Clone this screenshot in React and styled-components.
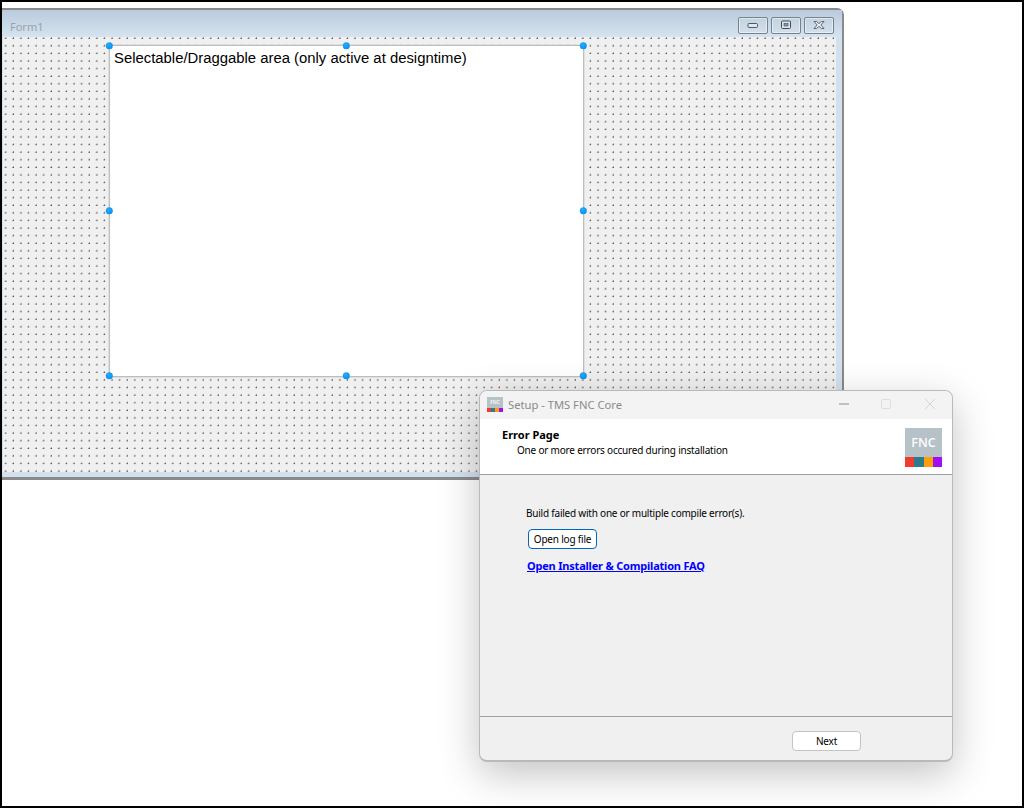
import React from 'react';
import styled, { createGlobalStyle } from 'styled-components';

const GlobalStyle = createGlobalStyle`
  html, body {
    margin: 0;
    padding: 0;
    background: #fff;
  }
`;

const HANDLES = [
  ['0%', '0%'], ['50%', '0%'], ['calc(100% + 1px)', '0%'],
  ['0%', '50%'], ['calc(100% + 1px)', '50%'],
  ['0%', '100%'], ['50%', '100%'], ['calc(100% + 1px)', '100%'],
];

const LOGO_COLORS = ['#f23a30', '#2b7c8e', '#ff9e0b', '#a00ff2'];

function Logo({ small }) {
  return (
    <LogoBox $small={small}>
      <LogoText $small={small}>FNC</LogoText>
      <LogoBar $small={small}>
        {LOGO_COLORS.map((c) => <LogoSwatch key={c} $color={c} />)}
      </LogoBar>
    </LogoBox>
  );
}

export default function App() {
  return (
    <>
      <GlobalStyle />
      <Screen>
        <FormWindow>
          <FormTitleBar>
            <FormTitle>Form1</FormTitle>
            <CaptionButtons>
              <CaptionButton>
                <svg width="12" height="8" viewBox="0 0 12 8">
                  <rect x="1" y="2.500" width="9.500" height="4" rx="1" fill="#dfe6ec" stroke="#4d5a66" />
                </svg>
              </CaptionButton>
              <CaptionButton>
                <svg width="12" height="10" viewBox="0 0 12 10">
                  <rect x="1.500" y="1" width="9" height="7.500" rx="1" fill="#dfe6ec" stroke="#3f4a55" />
                  <rect x="4" y="3.500" width="4" height="2.500" fill="#8c98a3" stroke="#3f4a55" strokeWidth=".6" />
                </svg>
              </CaptionButton>
              <CaptionButton>
                <svg width="14" height="10" viewBox="0 0 14 10">
                  <path d="M2 1.500h2.500L7 3.600 9.500 1.500H12L8.800 5 12 8.500H9.500L7 6.400 4.500 8.500H2L5.200 5Z" fill="#eef2f5" stroke="#4d5a66" strokeWidth=".9" />
                </svg>
              </CaptionButton>
            </CaptionButtons>
          </FormTitleBar>
          <DesignSurface>
            <DragArea>
              <DragLabel>Selectable/Draggable area (only active at designtime)</DragLabel>
              {HANDLES.map(([x, y]) => <Handle key={x + y} $x={x} $y={y} />)}
            </DragArea>
          </DesignSurface>
        </FormWindow>

        <SetupDialog>
          <DialogTitleBar>
            <Logo small />
            <DialogTitle>Setup - TMS FNC Core</DialogTitle>
            <DialogControls>
              <svg width="12" height="12" viewBox="0 0 12 12">
                <path d="M1 6h10" stroke="#8f8f8f" strokeWidth="1.200" />
              </svg>
              <svg width="12" height="12" viewBox="0 0 12 12">
                <rect x="1.500" y="1.500" width="9" height="9" rx="1" fill="none" stroke="#dcdcdc" />
              </svg>
              <svg width="14" height="12" viewBox="-2 0 14 12">
                <path d="M1 1l10 10M11 1L1 11" stroke="#d4d4d4" />
              </svg>
            </DialogControls>
          </DialogTitleBar>
          <DialogHeader>
            <HeaderText>
              <HeaderTitle>Error Page</HeaderTitle>
              <HeaderSub>One or more errors occured during installation</HeaderSub>
            </HeaderText>
            <Logo />
          </DialogHeader>
          <DialogBody>
            <BodyText>Build failed with one or multiple compile error(s).</BodyText>
            <LogButton>Open log file</LogButton>
            <FaqLink href="#faq">Open Installer &amp; Compilation FAQ</FaqLink>
          </DialogBody>
          <DialogFooter>
            <NextButton>Next</NextButton>
          </DialogFooter>
        </SetupDialog>
      </Screen>
    </>
  );
}

const Screen = styled.div`
  position: relative;
  box-sizing: border-box;
  width: 1024px;
  height: 808px;
  overflow: hidden;
  background: #fff;
  border: 2px solid #000;
`;

const FormWindow = styled.div`
  position: absolute;
  left: 0;
  top: 6px;
  box-sizing: border-box;
  width: 842px;
  height: 472px;
  display: flex;
  flex-direction: column;
  padding: 0 6px 5px 1px;
  background: #d3e1ef;
  border: solid #8a8a8a;
  border-width: 2px 2px 3px 0;
  border-top-right-radius: 7px;
`;

const FormTitleBar = styled.div`
  height: 27px;
  margin: 0 -6px 0 -1px;
  padding: 0 8px;
  flex: none;
  display: flex;
  align-items: center;
  justify-content: space-between;
  background: linear-gradient(#b9cbdc, #d6e3f0);
`;

const FormTitle = styled.span`
  margin-top: 6px;
  font: 11px "Noto Sans", sans-serif;
  color: #9aa3aa;
`;

const CaptionButtons = styled.div`
  display: flex;
  gap: 3px;
  margin-top: 3px;
`;

const CaptionButton = styled.div`
  box-sizing: border-box;
  width: 30px;
  height: 17px;
  display: flex;
  align-items: center;
  justify-content: center;
  background: linear-gradient(#c4d3e1, #d3dfeb);
  border: 1px solid #75838f;
  border-radius: 2px;
  box-shadow: inset 0 0 0 1px rgba(255, 255, 255, 0.45);
`;

const DesignSurface = styled.div`
  flex: 1;
  min-height: 0;
  padding: 8px 0 0 106px;
  background-color: #f0f0f0;
  background-image: radial-gradient(circle at 1px 1px, #111 0, #111 0.55px, transparent 0.75px);
  background-size: 7.6px 7.6px;
  background-position: 1.5px 0;
`;

const DragArea = styled.div`
  position: relative;
  box-sizing: border-box;
  width: 475px;
  height: 332px;
  padding: 3px 4px;
  background: #fff;
  border: 1px solid #bdbdbd;
  box-shadow: 0 0 0 0.5px #d0d0d0;
`;

const DragLabel = styled.div`
  font: 14.86px/18px "Liberation Sans", Arial, sans-serif;
  color: #000;
`;

const Handle = styled.span`
  position: absolute;
  left: ${(p) => p.$x};
  top: ${(p) => p.$y};
  width: 7px;
  height: 7px;
  transform: translate(-60%, -55%);
  border-radius: 50%;
  background: radial-gradient(circle at 40% 35%, #25aaff, #0088e8);
`;

const SetupDialog = styled.div`
  position: absolute;
  left: 477px;
  top: 388px;
  box-sizing: border-box;
  width: 474px;
  height: 372px;
  display: flex;
  flex-direction: column;
  overflow: hidden;
  background: #f0f0f0;
  border: 1px solid #b9b9b9;
  border-bottom-width: 2px;
  border-radius: 8px;
  box-shadow: 0 12px 40px rgba(0, 0, 0, 0.24);
  font: 10px "Noto Sans", sans-serif;
  letter-spacing: -0.2px;
  color: #000;
`;

const DialogTitleBar = styled.div`
  height: 28px;
  flex: none;
  box-sizing: border-box;
  display: flex;
  align-items: center;
  gap: 5px;
  padding: 0 16px 2px 7px;
  background: #f3f3f3;
`;

const DialogTitle = styled.span`
  flex: 1;
  font-size: 11.2px;
  letter-spacing: 0;
  color: #8a8a8a;
`;

const DialogControls = styled.div`
  display: flex;
  gap: 30px;
`;

const DialogHeader = styled.div`
  height: 56px;
  flex: none;
  box-sizing: border-box;
  display: flex;
  justify-content: space-between;
  padding: 9px 10px 0 22px;
  background: #fff;
  border-bottom: 1px solid #a0a0a0;
`;

const HeaderText = styled.div`
  display: flex;
  flex-direction: column;
`;

const HeaderTitle = styled.div`
  margin-top: -1px;
  font-size: 11px;
  font-weight: 700;
  letter-spacing: 0;
  line-height: 15px;
`;

const HeaderSub = styled.div`
  padding: 1px 0 0 15px;
  line-height: 15px;
`;

const LogoBox = styled.div`
  width: ${(p) => (p.$small ? 16 : 37)}px;
  height: ${(p) => (p.$small ? 15 : 39)}px;
  flex: none;
  display: flex;
  flex-direction: column;
  background: #b6c1c8;
`;

const LogoText = styled.div`
  flex: 1;
  display: flex;
  align-items: center;
  justify-content: center;
  font: 600 ${(p) => (p.$small ? 5 : 12.5)}px "Open Sans", sans-serif;
  letter-spacing: 0;
  color: #fff;
`;

const LogoBar = styled.div`
  height: ${(p) => (p.$small ? 4 : 10)}px;
  display: flex;
`;

const LogoSwatch = styled.span`
  flex: 1;
  background: ${(p) => p.$color};
`;

const DialogBody = styled.div`
  flex: 1;
  min-height: 0;
  display: flex;
  flex-direction: column;
  align-items: flex-start;
  padding: 31px 0 0 46px;
`;

const BodyText = styled.div`
  line-height: 15px;
  letter-spacing: -0.22px;
`;

const LogButton = styled.button`
  box-sizing: border-box;
  width: 69px;
  height: 20px;
  margin: 8px 0 0 2px;
  padding: 0;
  font: inherit;
  letter-spacing: inherit;
  color: #000;
  background: #fff;
  border: 1px solid #0067c0;
  border-radius: 4px;
`;

const FaqLink = styled.a`
  margin: 9px 0 0 1px;
  font-size: 11px;
  font-weight: 700;
  line-height: 15px;
  color: #0000ff;
`;

const DialogFooter = styled.div`
  height: 44px;
  flex: none;
  box-sizing: border-box;
  display: flex;
  justify-content: flex-end;
  align-items: flex-start;
  padding: 14px 91px 0 0;
  border-top: 1px solid #a0a0a0;
`;

const NextButton = styled.button`
  box-sizing: border-box;
  width: 69px;
  height: 20px;
  margin-right: 0;
  padding: 0;
  font: inherit;
  letter-spacing: inherit;
  color: #000;
  background: #fff;
  border: 1px solid #c4c4c4;
  border-radius: 4px;
`;
